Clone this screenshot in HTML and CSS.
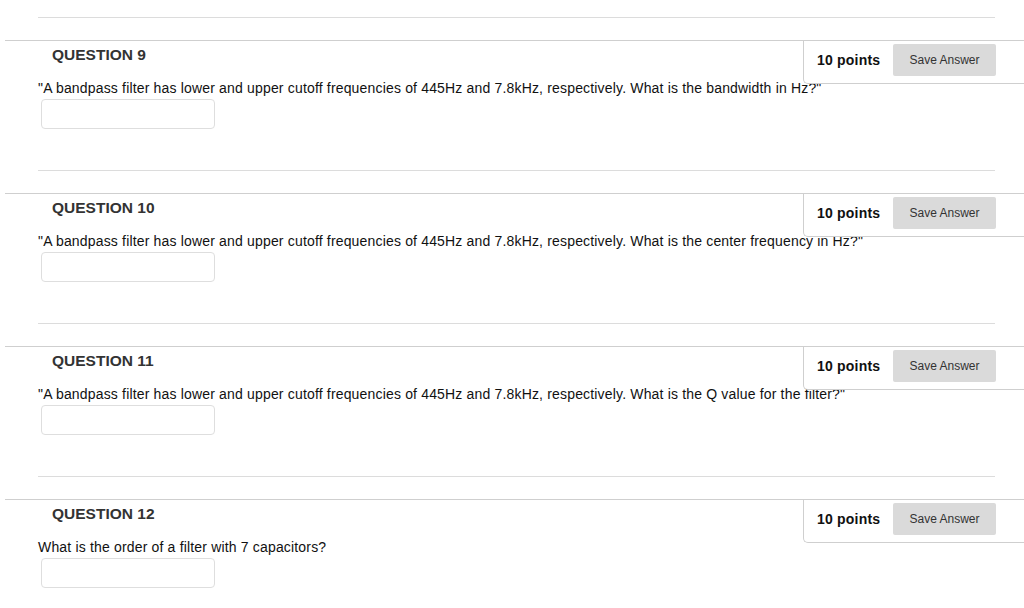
FILE: index.html
```html
<!DOCTYPE html>
<html>
<head>
<meta charset="utf-8">
<link rel="stylesheet" href="styles.css">
</head>
<body>
<div class="page">
  <div class="sep"></div>

  <div class="question">
    <div class="points-box">
      <span class="points">10 points</span>
      <button class="save">Save Answer</button>
    </div>
    <h3 class="q-title">QUESTION 9</h3>
    <div class="q-body">
      <p class="q-text">"A bandpass filter has lower and upper cutoff frequencies of 445Hz and 7.8kHz, respectively. What is the bandwidth in Hz?"</p>
      <input class="answer" type="text">
    </div>
  </div>
  <div class="sep"></div>

  <div class="question">
    <div class="points-box">
      <span class="points">10 points</span>
      <button class="save">Save Answer</button>
    </div>
    <h3 class="q-title">QUESTION 10</h3>
    <div class="q-body">
      <p class="q-text">"A bandpass filter has lower and upper cutoff frequencies of 445Hz and 7.8kHz, respectively. What is the center frequency in Hz?"</p>
      <input class="answer" type="text">
    </div>
  </div>
  <div class="sep"></div>

  <div class="question">
    <div class="points-box">
      <span class="points">10 points</span>
      <button class="save">Save Answer</button>
    </div>
    <h3 class="q-title">QUESTION 11</h3>
    <div class="q-body">
      <p class="q-text">"A bandpass filter has lower and upper cutoff frequencies of 445Hz and 7.8kHz, respectively. What is the Q value for the filter?"</p>
      <input class="answer" type="text">
    </div>
  </div>
  <div class="sep"></div>

  <div class="question">
    <div class="points-box">
      <span class="points">10 points</span>
      <button class="save">Save Answer</button>
    </div>
    <h3 class="q-title">QUESTION 12</h3>
    <div class="q-body">
      <p class="q-text">What is the order of a filter with 7 capacitors?</p>
      <input class="answer" type="text">
    </div>
  </div>
</div>
</body>
</html>
```

FILE: styles.css
```css
html, body {
  margin: 0;
  padding: 0;
  background: #fff;
  font-family: "Liberation Sans", Arial, sans-serif;
  color: #111;
  overflow: hidden;
}

.page {
  padding-top: 17px;
}

.sep {
  height: 1px;
  background: #dcdcdc;
  margin: 0 29px 0 38px;
}

.question {
  position: relative;
  margin: 22px 0 0 5px;
  border-top: 1px solid #cfcfcf;
  height: 129px;
}

.q-title {
  margin: 4px 0 0 47px;
  font-size: 15.5px;
  line-height: 20px;
  font-weight: bold;
  color: #333;
}

.q-body {
  padding-left: 33px;
}

.q-text {
  margin: 13px 0 0;
  font-size: 14px;
  letter-spacing: 0.17px;
  line-height: 20px;
  color: #111;
}

.answer {
  display: block;
  box-sizing: border-box;
  margin: 1px 0 0 3px;
  width: 174px;
  height: 30px;
  border: 1px solid #dedede;
  border-radius: 4px;
  background: #fff;
  padding: 0 6px;
  font: 14px "Liberation Sans", Arial, sans-serif;
}

.points-box {
  position: absolute;
  top: 0;
  right: 0;
  z-index: 1;
  width: 221px;
  height: 43px;
  box-sizing: border-box;
  display: flex;
  align-items: flex-start;
  padding: 3px 28px 0 13px;
  background: #fff;
  border-left: 1px solid #cfcfcf;
  border-bottom: 1px solid #cfcfcf;
  border-bottom-left-radius: 5px;
}

.points {
  font-size: 14px;
  font-weight: bold;
  letter-spacing: 0.2px;
  line-height: 32px;
  color: #111;
}

.save {
  margin-left: auto;
  width: 103px;
  height: 32px;
  border: none;
  border-radius: 2px;
  background: #dadada;
  color: #333;
  font: 12px "Liberation Sans", Arial, sans-serif;
  padding: 0;
}
```
